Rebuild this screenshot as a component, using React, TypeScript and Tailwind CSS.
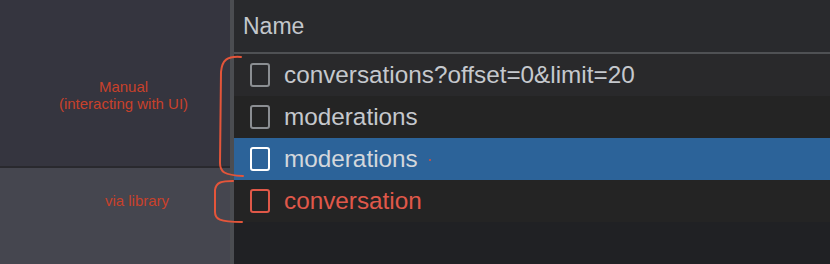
import React from "react";

interface RowParams {
  name: string;
  tone: "plain" | "dark" | "selected" | "error";
}

const rowBg = {
  plain: "bg-[#29292b]",
  dark: "bg-[#242424]",
  selected: "bg-[#2c6399]",
  error: "bg-[#242424]",
};

const boxBorder = {
  plain: "border-[#8b8e92]",
  dark: "border-[#8b8e92]",
  selected: "border-white",
  error: "border-[#df5848]",
};

const textColor = {
  plain: "text-[#c5c8cd]",
  dark: "text-[#c5c8cd]",
  selected: "text-[#d3d7dc]",
  error: "text-[#e0584a]",
};

function Row(props: RowParams) {
  const { name, tone } = props;
  return (
    <div className={`relative flex h-[42px] items-center gap-[14px] pl-[16px] ${rowBg[tone]}`}>
      <div className={`h-[24px] w-[20px] rounded-[3px] border-2 ${boxBorder[tone]}`} />
      <span className={`text-[24.3px] leading-none ${textColor[tone]}`}>{name}</span>
      {tone === "selected" && (
        <span className="absolute left-[195px] top-[21px] h-[2px] w-[2px] rounded-full bg-[#d9503c]" />
      )}
    </div>
  );
}

export default function App() {
  const rows: RowParams[] = [
    { name: "conversations?offset=0&limit=20", tone: "plain" },
    { name: "moderations", tone: "dark" },
    { name: "moderations", tone: "selected" },
    { name: "conversation", tone: "error" },
  ];

  return (
    <div
      className="relative flex h-[264px] w-[830px] overflow-hidden"
      style={{ fontFamily: '"Liberation Sans", Arial, sans-serif' }}
    >
      {/* annotation side */}
      <div className="flex w-[230px] flex-col">
        <div className="flex h-[166px] flex-col items-center bg-[#35353f] pl-[17px] pt-[78px] text-[15px] leading-[17px] text-[#c8412b]">
          <span>Manual</span>
          <span>(interacting with UI)</span>
        </div>
        <div className="h-[2px] bg-[#29292e]" />
        <div className="flex flex-1 flex-col items-center bg-[#45464f] pl-[44px] pt-[24px] text-[15px] leading-[17px] text-[#c8412b]">
          <span>via library</span>
        </div>
      </div>
      <div className="w-[4px] bg-[#4b4d51]" />
      {/* request list */}
      <div className="flex flex-1 flex-col bg-[#202124]">
        <div className="flex h-[52px] items-center bg-[#292a2d] pl-[9px] text-[23px] text-[#c3c7cc]">
          Name
        </div>
        <div className="h-[2px] bg-[#4f5154]" />
        {rows.map((row, i) => (
          <Row key={i} name={row.name} tone={row.tone} />
        ))}
      </div>
      {/* hand-drawn braces */}
      <svg
        className="pointer-events-none absolute left-0 top-0"
        width="830"
        height="264"
        fill="none"
        stroke="#e4553a"
        strokeWidth="2"
        strokeLinecap="round"
      >
        <path d="M241 57 C227 56 222 60 221 72 L220 163 C220 172 224 175 243 176" />
        <path d="M233 181 C222 181 216 182 215 190 L215 212 C215 219 219 222 242 222" />
      </svg>
    </div>
  );
}
